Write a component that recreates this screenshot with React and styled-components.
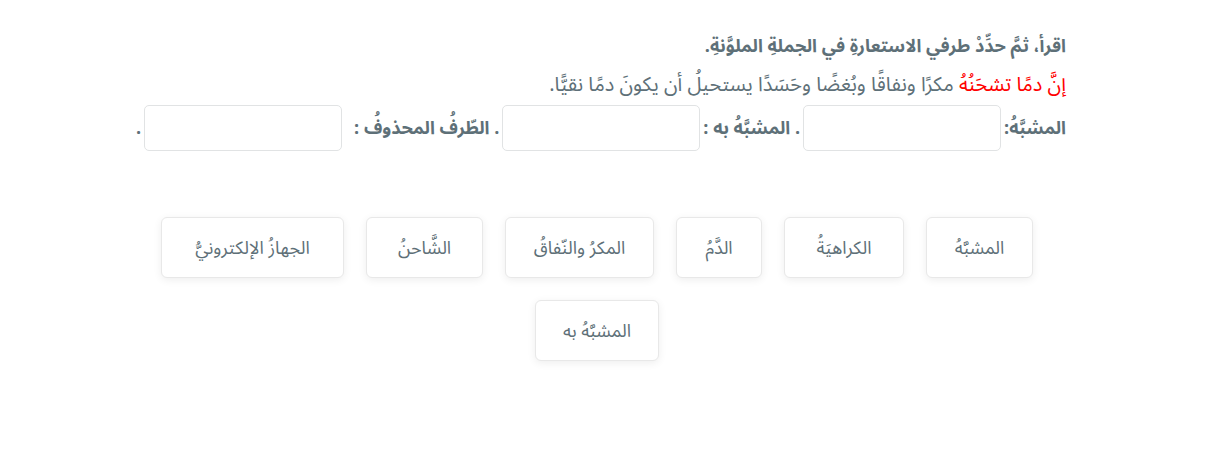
import React from "react";
import styled, { createGlobalStyle } from "styled-components";

const TEXT = "#5e7078";

const GlobalStyle = createGlobalStyle`
  body {
    margin: 0;
    background: #fff;
    font-family: "Noto Sans Arabic", "Noto Naskh Arabic", "DejaVu Sans", sans-serif;
  }
`;

const Page = styled.div`
  direction: rtl;
  padding: 27px 152px 40px 128px;
  color: ${TEXT};
`;

const Title = styled.p`
  margin: 0;
  font-size: 18px;
  font-weight: bold;
  line-height: 38px;
`;

const Sentence = styled.p`
  margin: 0;
  font-size: 20px;
  line-height: 40px;
`;

const Red = styled.span`
  color: #ff0000;
`;

const Answers = styled.div`
  display: flex;
  align-items: center;
  flex-wrap: wrap;
  font-size: 18px;
  font-weight: bold;
  line-height: 46px;
`;

const Label = styled.span`
  white-space: pre;
  padding-left: ${(p) => p.$extra || 0}px;
`;

const Field = styled.input`
  box-sizing: border-box;
  width: 198px;
  height: 46px;
  margin: 0 3px;
  border: 1px solid #e1e3e4;
  border-radius: 5px;
  background: #fff;
  outline: none;
`;

const Bank = styled.div`
  display: flex;
  flex-wrap: wrap;
  justify-content: center;
  margin-top: 55px;
`;

const Chip = styled.div`
  box-sizing: border-box;
  height: 61px;
  margin: 11px;
  display: flex;
  align-items: center;
  justify-content: center;
  border: 1px solid #e8e8e8;
  border-radius: 6px;
  background: #fff;
  box-shadow: 0 2px 8px rgba(0, 0, 0, 0.07);
  font-size: 18px;
  color: ${TEXT};
  white-space: nowrap;
`;

const chips = [
  { text: "المشبَّهُ", w: 107 },
  { text: "الكراهيَةُ", w: 120 },
  { text: "الدَّمُ", w: 86 },
  { text: "المكرُ والنّفاقُ", w: 149 },
  { text: "الشَّاحنُ", w: 117 },
  { text: "الجهازُ الإلكترونيُّ", w: 183 },
  { text: "المشبَّهُ به", w: 124 },
];

export default function App() {
  return (
    <>
      <GlobalStyle />
      <Page>
        <Title>اقرأ، ثمَّ حدِّدْ طرفي الاستعارةِ في الجملةِ الملوَّنةِ.</Title>
        <Sentence>
          <Red>إنَّ دمًا تشحَنُهُ</Red> مكرًا ونفاقًا وبُغضًا وحَسَدًا يستحيلُ أن يكونَ دمًا نقيًّا.
        </Sentence>
        <Answers>
          <Label>المشبَّهُ:</Label>
          <Field />
          <Label>. المشبَّهُ به :</Label>
          <Field />
          <Label $extra={9}>. الطّرفُ المحذوفُ :</Label>
          <Field />
          <Label>.</Label>
        </Answers>
        <Bank>
          {chips.map((c) => (
            <Chip key={c.text} style={{ width: c.w }}>
              {c.text}
            </Chip>
          ))}
        </Bank>
      </Page>
    </>
  );
}
